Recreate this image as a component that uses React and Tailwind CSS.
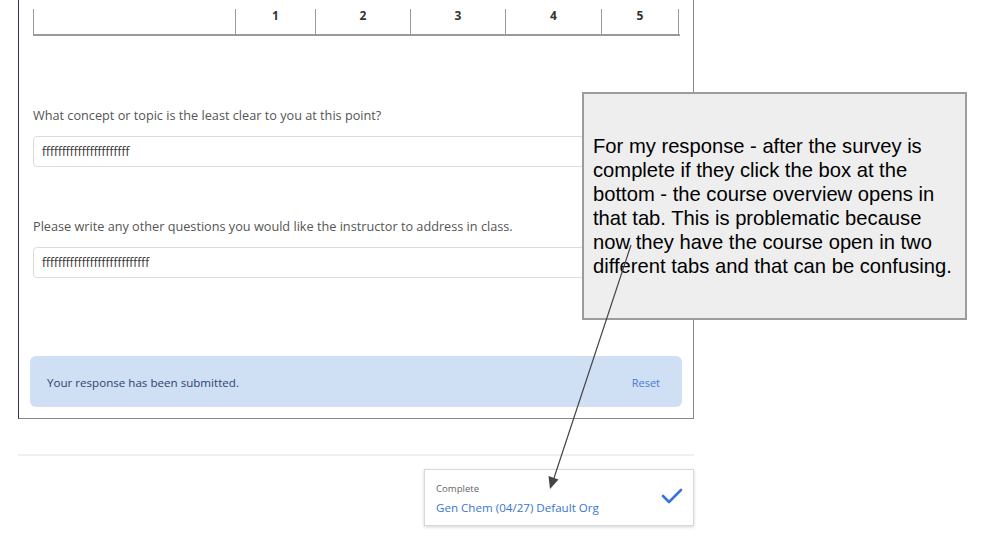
import React from "react"

const cols = [
  { w: "w-[202px]", label: "" },
  { w: "w-[80px]", label: "1" },
  { w: "w-[95px]", label: "2" },
  { w: "w-[95px]", label: "3" },
  { w: "w-[96px]", label: "4" },
  { w: "w-[78px]", label: "5" },
]

function Question({ label, value, labelGap }) {
  return (
    <div className={labelGap}>
      <p className="text-[12.7px] leading-[18px] text-[#555]">{label}</p>
      <div className="mt-[12px] h-[31px] w-[647px] rounded-[4px] border border-[#dcdcdc] px-[8px] flex items-center">
        <span className="text-[11.8px] text-[#333]">{value}</span>
      </div>
    </div>
  )
}

export default function App() {
  return (
    <div className="relative h-[546px] w-[998px] overflow-hidden bg-white font-['Open_Sans',sans-serif]">
      <div className="ml-[18px] w-[676px]">
        {/* survey card */}
        <div className="border-l border-l-[#33334a] border-r border-r-[#888] border-b border-b-[#888] pt-[9px] pb-[11px]">
          <div className="ml-[14px] flex h-[27px] w-[647px] border-b-2 border-[#9a9a9a]">
            {cols.map((c, i) => (
              <div
                key={i}
                className={`${c.w} border-l border-[#9a9a9a] ${i === cols.length - 1 ? "border-r" : ""} flex justify-center text-[12px] leading-[14px] font-bold text-[#333]`}
              >
                {c.label}
              </div>
            ))}
          </div>

          <div className="ml-[14px]">
            <Question
              labelGap="mt-[70px]"
              label="What concept or topic is the least clear to you at this point?"
              value="ffffffffffffffffffffff"
            />
            <Question
              labelGap="mt-[50px]"
              label="Please write any other questions you would like the instructor to address in class."
              value="fffffffffffffffffffffffffff"
            />
          </div>

          <div className="mt-[78px] ml-[11px] mr-[11px] flex h-[51px] items-center justify-between rounded-[6px] bg-[#cfdff4] pl-[17px] pr-[22px] pt-[3px]">
            <span className="text-[11.6px] text-[#2e4470]">Your response has been submitted.</span>
            <span className="text-[11px] text-[#4a7bd0]">Reset</span>
          </div>
        </div>

        <div className="mt-[35px] h-[2px] w-[676px] bg-[#efefef]" />

        <div className="mt-[13px] ml-[406px] flex h-[57px] w-[270px] items-center justify-between border border-[#d9d9d9] bg-white pl-[11px] pr-[10px] shadow-[0_1px_3px_rgba(0,0,0,0.18)]">
          <div className="flex flex-col pt-[2px]">
            <span className="text-[9.6px] leading-[14px] text-[#666]">Complete</span>
            <span className="mt-[3px] text-[11.6px] leading-[17px] text-[#3a74d6]">Gen Chem (04/27) Default Org</span>
          </div>
          <svg width="22" height="16" viewBox="0 0 22 16" className="mt-[-4px]">
            <path d="M2 8 L8 14 L20 2" fill="none" stroke="#3a74d6" strokeWidth="2.6" strokeLinecap="round" strokeLinejoin="round" />
          </svg>
        </div>
      </div>

      {/* annotation callout */}
      <div className="absolute left-[582px] top-[92px] flex h-[228px] w-[385px] items-center border-2 border-[#9c9c9c] bg-[#eeeeee] pl-[9px]">
        <div className="font-['Liberation_Sans',Arial,sans-serif] text-[20.2px] leading-[24px] text-black whitespace-nowrap">
          <div>For my response - after the survey is</div>
          <div>complete if they click the box at the</div>
          <div>bottom - the course overview opens in</div>
          <div>that tab. This is problematic because</div>
          <div>now they have the course open in two</div>
          <div>different tabs and that can be confusing.</div>
        </div>
      </div>

      {/* arrow */}
      <svg className="pointer-events-none absolute left-0 top-0" width="998" height="546" viewBox="0 0 998 546">
        <line x1="631" y1="245" x2="554" y2="478" stroke="#444" strokeWidth="1.2" />
        <polygon points="550,489 548.5,476 558.5,479.5" fill="#444" />
      </svg>
    </div>
  )
}
